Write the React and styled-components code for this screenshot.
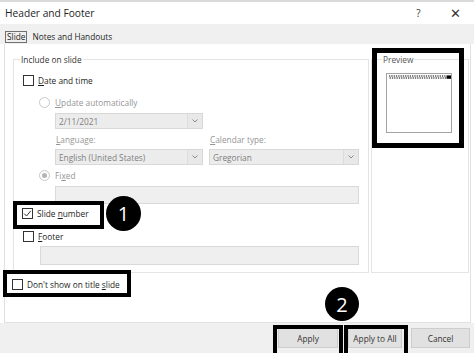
import React from "react";
import styled, { createGlobalStyle } from "styled-components";

const Global = createGlobalStyle`
  html, body { margin: 0; padding: 0; background: #ffffff; }
  body { font-family: "Open Sans", "Noto Sans", sans-serif; }
  * { box-sizing: border-box; }
  svg { display: block; }
`;

const FS = "8.3px";

const Dialog = styled.div`
  width: 474px;
  height: 353px;
  display: flex;
  flex-direction: column;
  overflow: hidden;
  border-top: 2px solid #dadada;
  background: #ffffff;
`;

const TitleBar = styled.div`
  height: 22px;
  display: flex;
  align-items: center;
  padding-left: 5px;
  color: #1e1e1e;
  font-size: 10.2px;
`;

const Title = styled.div`
  flex: 1;
`;

const TitleButton = styled.div`
  width: 37px;
  height: 22px;
  display: flex;
  align-items: center;
  justify-content: center;
  color: #333;
  font-size: ${(p) => p.$size || "10px"};
`;

const TabStrip = styled.div`
  height: 20px;
  background: #f0f0f0;
  display: flex;
  align-items: flex-end;
  gap: 3px;
  padding: 0 0 1px 5px;
  font-size: ${FS};
  color: #1e1e1e;
`;

const Tab = styled.div`
  height: 12px;
  line-height: 10px;
  padding: 0 1px;
  border: 1px solid ${(p) => (p.$active ? "#707070" : "transparent")};
`;

const Body = styled.div`
  flex: 1;
  display: flex;
  flex-direction: column;
  padding: 0 3px 0 4px;
`;

const Panel = styled.div`
  flex: 1;
  border: 1px solid #e1e1e1;
  border-top: none;
  display: flex;
  flex-direction: column;
  padding: 15px 0 0 8px;
`;

const GroupsRow = styled.div`
  display: flex;
  gap: 2px;
`;

const Group = styled.div`
  position: relative;
  width: ${(p) => p.$w}px;
  height: 214px;
  border: 1px solid #e4e4e4;
  display: flex;
  flex-direction: column;
  align-items: flex-start;
  padding: ${(p) => p.$pad};
`;

const Legend = styled.span`
  position: absolute;
  top: -6px;
  left: ${(p) => p.$left}px;
  padding: 0 1px;
  background: #ffffff;
  font-size: ${FS};
  line-height: 11px;
  color: ${(p) => p.$color || "#333"};
  z-index: 1;
`;

const Row = styled.div`
  position: relative;
  display: flex;
  align-items: center;
  gap: ${(p) => (p.$gap ?? 4)}px;
  height: ${(p) => p.$h || 11}px;
  margin-top: ${(p) => p.$mt || 0}px;
  margin-left: ${(p) => p.$ml || 0}px;
  font-size: ${FS};
  color: ${(p) => (p.$disabled ? "#959595" : "#1e1e1e")};
  white-space: nowrap;
`;

const Box = styled.span`
  width: 11px;
  height: 11px;
  flex: none;
  border: 1px solid #333333;
  background: #ffffff;
  display: flex;
  align-items: center;
  justify-content: center;
`;

const Radio = styled.span`
  width: 11px;
  height: 11px;
  flex: none;
  border-radius: 50%;
  border: 1px solid #c9c9c9;
  background: #ffffff;
  display: flex;
  align-items: center;
  justify-content: center;
  &::after {
    content: "";
    display: ${(p) => (p.$on ? "block" : "none")};
    width: 5px;
    height: 5px;
    border-radius: 50%;
    background: #b5b5b5;
  }
`;

const Key = styled.span`
  text-decoration: underline;
  text-underline-offset: 1px;
`;

const FieldRow = styled.div`
  display: flex;
  gap: 6px;
  margin-top: ${(p) => p.$mt || 0}px;
  margin-left: ${(p) => p.$ml || 0}px;
`;

const Select = styled.div`
  width: ${(p) => p.$w}px;
  height: 16px;
  display: flex;
  border: 1px solid #d8d8d8;
  background: #ececec;
  font-size: ${FS};
  color: #7e7e7e;
`;

const SelectText = styled.div`
  flex: 1;
  display: flex;
  align-items: center;
  padding-left: 3px;
  white-space: nowrap;
`;

const SelectArrow = styled.div`
  width: 15px;
  border-left: 1px solid #dcdcdc;
  background: #e8e8e8;
  display: flex;
  align-items: center;
  justify-content: center;
`;

const Label = styled.div`
  width: ${(p) => p.$w}px;
  height: 10px;
  line-height: 10px;
  padding-left: 1px;
  font-size: ${FS};
  color: #959595;
  white-space: nowrap;
`;

const TextBox = styled.div`
  width: ${(p) => p.$w}px;
  height: ${(p) => p.$h}px;
  margin-top: ${(p) => p.$mt || 0}px;
  margin-left: ${(p) => p.$ml || 0}px;
  border: 1px solid #d9d9d9;
  background: #efefef;
`;

const Highlight = styled.span`
  position: absolute;
  left: ${(p) => p.$l}px;
  top: ${(p) => p.$t}px;
  width: ${(p) => p.$w}px;
  height: ${(p) => p.$h}px;
  border: ${(p) => p.$b || 4}px solid #000000;
  pointer-events: none;
  z-index: 2;
`;

const Badge = styled.span`
  position: absolute;
  left: ${(p) => p.$l}px;
  top: ${(p) => p.$t}px;
  width: ${(p) => p.$d || 34}px;
  height: ${(p) => p.$d || 34}px;
  border-radius: 50%;
  background: #000000;
  color: #ffffff;
  font-size: 20px;
  display: flex;
  align-items: center;
  justify-content: center;
  z-index: 3;
`;

const Thumb = styled.div`
  width: 66px;
  height: 60px;
  border: 1px solid #a3a3a3;
  background: #ffffff;
  padding: 1px 1px 0 2px;
`;

const DontShow = styled(Row)`
  margin-top: 6px;
  margin-left: -1px;
`;

const Footer = styled.div`
  position: relative;
  height: 30px;
  background: #f0f0f0;
  display: flex;
  justify-content: flex-end;
  align-items: flex-start;
  padding: 5px 4px 0 0;
`;

const Button = styled.div`
  position: relative;
  width: ${(p) => p.$w}px;
  height: 20px;
  margin-left: ${(p) => p.$ml || 0}px;
  background: #e1e1e1;
  border: 1px solid #cdcdcd;
  display: flex;
  align-items: center;
  justify-content: center;
  font-size: ${FS};
  color: #333333;
`;

const Chevron = () => (
  <svg width="6" height="4" viewBox="0 0 6 4">
    <polyline points="0.5,0.5 3,3 5.5,0.5" fill="none" stroke="#8a8a8a" strokeWidth="1" />
  </svg>
);

const Check = () => (
  <svg width="9" height="9" viewBox="0 0 9 9">
    <polyline points="1.2,4.6 3.5,7 7.8,1.8" fill="none" stroke="#333" strokeWidth="1" />
  </svg>
);

const PreviewLine = () => (
  <svg width="62" height="4" viewBox="0 0 62 4">
    <line x1="0" y1="1" x2="57" y2="1" stroke="#000" strokeWidth="1.2" strokeDasharray="1.3 1" />
    <line x1="0.6" y1="3" x2="57" y2="3" stroke="#000" strokeWidth="1.2" strokeDasharray="1.3 1" />
    <rect x="57.5" y="0.4" width="4.5" height="3.4" fill="#000" />
  </svg>
);

export default function App() {
  return (
    <>
      <Global />
      <Dialog>
        <TitleBar>
          <Title>Header and Footer</Title>
          <TitleButton>?</TitleButton>
          <TitleButton $size="13px">✕</TitleButton>
        </TitleBar>
        <TabStrip>
          <Tab $active>Slide</Tab>
          <Tab>Notes and Handouts</Tab>
        </TabStrip>
        <Body>
          <Panel>
            <GroupsRow>
              <Group $w={356} $pad="15px 0 0 9px">
                <Legend $left={6}>Include on slide</Legend>
                <Row>
                  <Box />
                  <span><Key>D</Key>ate and time</span>
                </Row>
                <Row $mt={11} $ml={16} $gap={5} $disabled>
                  <Radio />
                  <span><Key>U</Key>pdate automatically</span>
                </Row>
                <FieldRow $mt={5} $ml={32}>
                  <Select $w={148}>
                    <SelectText>2/11/2021</SelectText>
                    <SelectArrow><Chevron /></SelectArrow>
                  </Select>
                </FieldRow>
                <FieldRow $mt={6} $ml={32}>
                  <Label $w={148}><Key>L</Key>anguage:</Label>
                  <Label $w={150}><Key>C</Key>alendar type:</Label>
                </FieldRow>
                <FieldRow $mt={4} $ml={32}>
                  <Select $w={148}>
                    <SelectText>English (United States)</SelectText>
                    <SelectArrow><Chevron /></SelectArrow>
                  </Select>
                  <Select $w={150}>
                    <SelectText>Gregorian</SelectText>
                    <SelectArrow><Chevron /></SelectArrow>
                  </Select>
                </FieldRow>
                <Row $mt={5} $ml={16} $gap={5} $disabled>
                  <Radio $on />
                  <span>Fi<Key>x</Key>ed</span>
                </Row>
                <TextBox $w={304} $h={18} $mt={5} $ml={32} />
                <Row $mt={4} $ml={-1}>
                  <Box><Check /></Box>
                  <span>Slide <Key>n</Key>umber</span>
                  <Highlight $l={-9} $t={-7} $w={91} $h={28} />
                  <Badge $l={84} $t={-12} $d={35}>1</Badge>
                </Row>
                <Row $mt={12}>
                  <Box />
                  <span><Key>F</Key>ooter</span>
                </Row>
                <TextBox $w={319} $h={19} $mt={4} $ml={17} />
              </Group>
              <Group $w={98} $pad="13px 0 0 14px">
                <Legend $left={10} $color="#555">Preview</Legend>
                <Highlight $l={0} $t={-12} $w={92} $h={100} $b={5} />
                <Thumb>
                  <PreviewLine />
                </Thumb>
              </Group>
            </GroupsRow>
            <DontShow>
              <Box />
              <span>Don't show on title <Key>s</Key>lide</span>
              <Highlight $l={-9} $t={-9} $w={128} $h={27} />
            </DontShow>
          </Panel>
        </Body>
        <Footer>
          <Badge $l={325} $t={-36}>2</Badge>
          <Button $w={60}>
            Apply
            <Highlight $l={-6} $t={-4} $w={70} $h={40} />
          </Button>
          <Button $w={54} $ml={10}>
            Apply to All
            <Highlight $l={-5} $t={-4} $w={64} $h={40} />
          </Button>
          <Button $w={59} $ml={9}>Cancel</Button>
        </Footer>
      </Dialog>
    </>
  );
}
